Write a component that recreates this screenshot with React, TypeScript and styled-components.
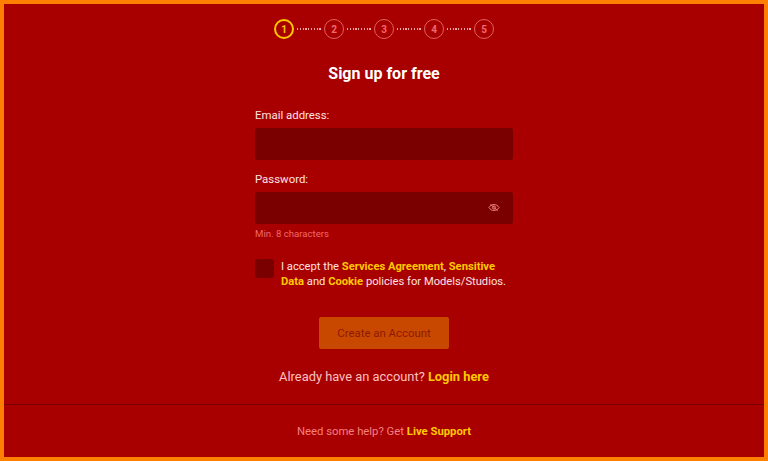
import styled, { createGlobalStyle } from 'styled-components';

const GlobalStyle = createGlobalStyle`
  html, body {
    margin: 0;
    padding: 0;
    background: #ff8000;
  }
  * {
    box-sizing: border-box;
  }
`;

const Frame = styled.div`
  width: 768px;
  height: 461px;
  border: 4px solid #ff8000;
  background: #a80000;
  font-family: Roboto, "Liberation Sans", sans-serif;
  display: flex;
  flex-direction: column;
  overflow: hidden;
`;

const Main = styled.main`
  height: 401px;
  display: flex;
  flex-direction: column;
  align-items: center;
  padding-top: 15px;
  border-bottom: 1px solid #7a0000;
`;

const Stepper = styled.ol`
  list-style: none;
  margin: 0;
  padding: 0;
  display: flex;
  align-items: center;
`;

const StepItem = styled.li`
  display: flex;
  align-items: center;
`;

const StepCircle = styled.span<{ $active?: boolean }>`
  width: 20px;
  height: 20px;
  border-radius: 50%;
  border: ${(p) => (p.$active ? '2px solid #ffc800' : '1px solid #e06060')};
  color: ${(p) => (p.$active ? '#ffc800' : '#f06a6a')};
  font-size: 10px;
  font-weight: 700;
  display: flex;
  align-items: center;
  justify-content: center;
`;

const StepDots = styled.span`
  width: 25px;
  height: 2px;
  margin: 0 2.5px;
  background: repeating-linear-gradient(to right, #f0a8a8 0 1.2px, transparent 1.2px 2.8px);
`;

const Title = styled.h1`
  margin: 23px 0 0;
  font-size: 16px;
  line-height: 23px;
  font-weight: 700;
  color: #fff;
`;

const Form = styled.form`
  width: 258px;
  margin-top: 22px;
  display: flex;
  flex-direction: column;
`;

const Label = styled.label`
  font-size: 11.4px;
  line-height: 16px;
  color: #ffe0e0;
  margin-bottom: 5px;
`;

const Field = styled.div`
  height: 32px;
  border-radius: 2px;
  background: #7a0000;
  display: flex;
  align-items: center;
  justify-content: flex-end;
  padding: 0 13px 2px 0;
  margin-bottom: 11px;
`;

const PasswordField = styled(Field)`
  margin-bottom: 3px;
`;

const Hint = styled.div`
  font-size: 9.6px;
  line-height: 13px;
  color: #f06a6a;
`;

const Consent = styled.div`
  display: flex;
  gap: 7px;
  margin-top: 17px;
`;

const Checkbox = styled.span`
  flex: none;
  width: 19px;
  height: 19px;
  margin-top: 2px;
  border-radius: 3px;
  background: #7a0000;
`;

const ConsentText = styled.p`
  margin: 2px 0 0;
  font-size: 11.2px;
  line-height: 15px;
  color: #ffe0e0;
`;

const Strong = styled.a`
  font-weight: 700;
  color: #ffc800;
`;

const SubmitButton = styled.button`
  align-self: center;
  width: 130px;
  height: 32px;
  margin-top: 28px;
  border: 0;
  border-radius: 2px;
  background: #c84800;
  color: #8f1a00;
  font-family: inherit;
  font-size: 11.4px;
`;

const LoginLine = styled.p`
  margin: 13px 0 0;
  font-size: 12.85px;
  line-height: 30px;
  color: #ffc0c0;
  text-align: center;
`;

const Footer = styled.footer`
  flex: 1;
  display: flex;
  align-items: center;
  justify-content: center;
  font-size: 11.3px;
  color: #f58080;
`;

const EyeIcon = () => (
  <svg width="12" height="9" viewBox="0 0 13 10" fill="none" stroke="#f08080" strokeWidth="1.1">
    <path d="M.8 5C2.300 2.800 4.200 1.700 6.500 1.700S10.700 2.800 12.200 5C10.700 7.200 8.800 8.300 6.500 8.300S2.300 7.200.8 5Z" />
    <circle cx="6.500" cy="5" r="1.800" />
    <path d="M2.500 1.500 10.500 8.500" />
  </svg>
);

const steps = [1, 2, 3, 4, 5];

export default function App() {
  return (
    <Frame>
      <GlobalStyle />
      <Main>
        <Stepper>
          {steps.map((step) => (
            <StepItem key={step}>
              <StepCircle $active={step === 1}>{step}</StepCircle>
              {step < 5 && <StepDots />}
            </StepItem>
          ))}
        </Stepper>
        <Title>Sign up for free</Title>
        <Form>
          <Label>Email address:</Label>
          <Field />
          <Label>Password:</Label>
          <PasswordField>
            <EyeIcon />
          </PasswordField>
          <Hint>Min. 8 characters</Hint>
          <Consent>
            <Checkbox />
            <ConsentText>
              I accept the <Strong>Services Agreement</Strong>, <Strong>Sensitive Data</Strong> and{' '}
              <Strong>Cookie</Strong> policies for Models/Studios.
            </ConsentText>
          </Consent>
          <SubmitButton type="button">Create an Account</SubmitButton>
          <LoginLine>
            Already have an account? <Strong>Login here</Strong>
          </LoginLine>
        </Form>
      </Main>
      <Footer>
        <span>
          Need some help? Get <Strong>Live Support</Strong>
        </span>
      </Footer>
    </Frame>
  );
}
